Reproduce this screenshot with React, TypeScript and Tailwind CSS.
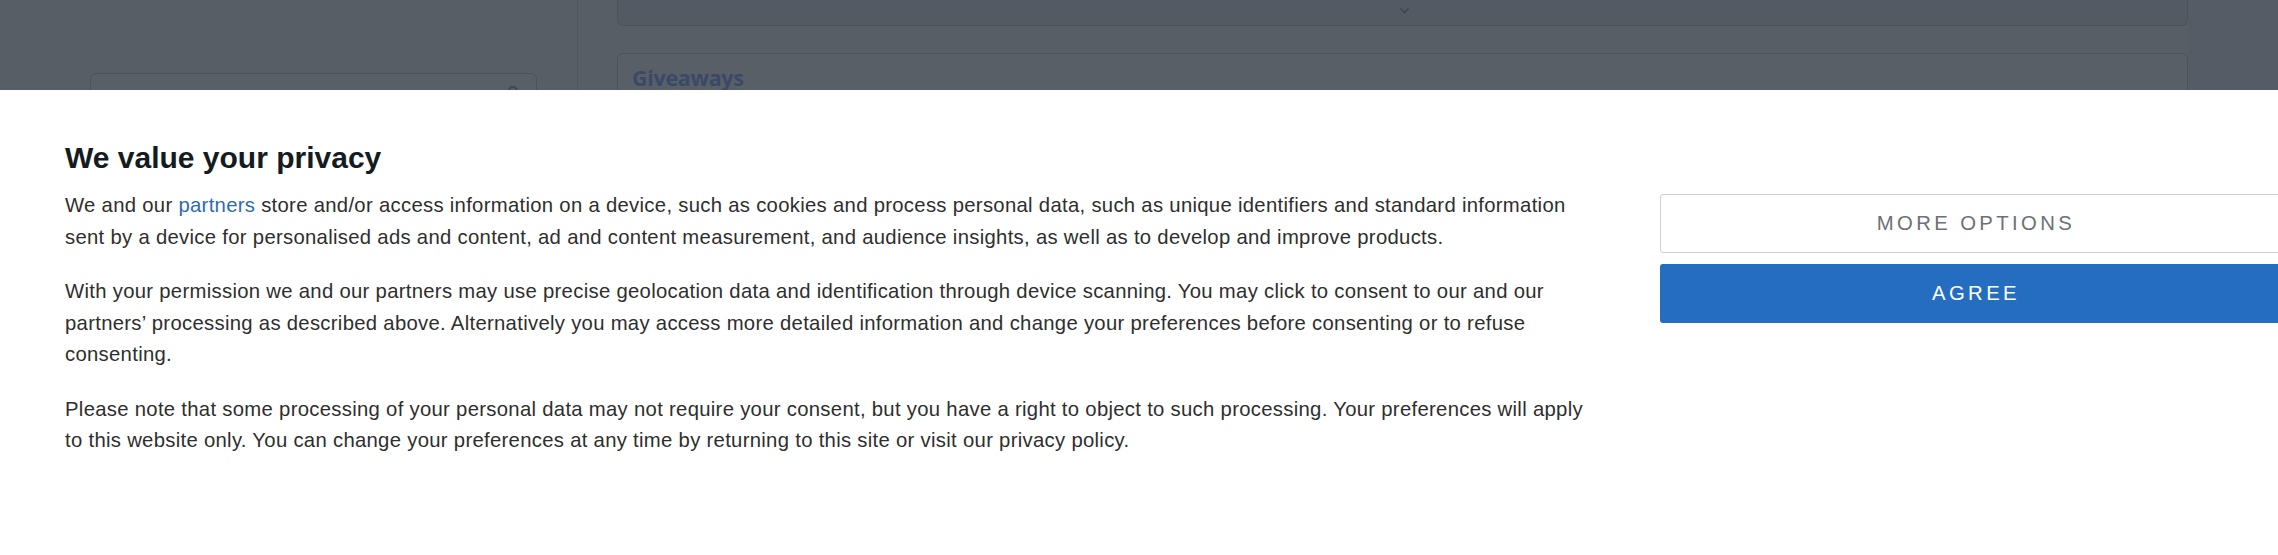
import React from "react";

export default function App() {
  return (
    <div className="w-[2278px] h-[555px] overflow-hidden bg-white" style={{ fontFamily: "'Liberation Sans', Arial, sans-serif" }}>
      {/* dimmed page behind the consent panel */}
      <div className="h-[90px] overflow-hidden flex items-start bg-[#575e66]">
        <div className="w-[577px] shrink-0 pl-[90px] pr-[40px] pt-[73px]">
          <div className="relative h-[40px] rounded-[6px] border border-[#4c535b] bg-[#585f67]">
            <div className="absolute right-[18px] top-[12px] w-[10px] h-[10px] rounded-full border-2 border-[#3f464e]" />
          </div>
        </div>
        <div className="w-px h-[90px] shrink-0 bg-[#50575f]" />
        <div className="w-[1610px] shrink-0 pl-[39px] flex flex-col gap-[27px]">
          <div className="relative h-[27px] shrink-0 -mt-px rounded-b-[6px] border border-t-0 border-[#4c535b] bg-[#535a63]">
            <svg className="absolute left-[781px] top-[8px]" width="11" height="8" viewBox="0 0 11 8" fill="none">
              <path d="M1.5 1.5 L5.5 5.8 L9.5 1.5" stroke="#3d444d" strokeWidth="1.4" />
            </svg>
          </div>
          <div className="h-[60px] shrink-0 rounded-t-[6px] border border-[#4c535b] bg-[#585f67] px-[14px] pt-[8px]">
            <div className="text-[21.5px] font-bold text-[#3a4968] tracking-[-0.3px]" style={{ fontFamily: "'Open Sans', sans-serif" }}>
              Giveaways
            </div>
          </div>
        </div>
        <div className="flex-1 h-[90px] bg-[#555c65]" />
      </div>

      {/* consent panel */}
      <div className="h-[465px] bg-white flex pl-[65px] pt-[50px] gap-[60px]">
        <div className="w-[1535px] shrink-0 text-[#2e2e2e] text-[20.3px] leading-[31.5px] tracking-[0.3px]">
          <h2 className="text-[30px] leading-[35px] font-bold text-[#141b22] tracking-normal mb-[15px]">We value your privacy</h2>
          <p className="mb-[23px]">
            We and our <span className="text-[#2b6cb6]">partners</span> store and/or access information on a device, such as cookies and process personal data, such as unique identifiers and standard information sent by a device for personalised ads and content, ad and content measurement, and audience insights, as well as to develop and improve products.
          </p>
          <p className="mb-[23px]">
            With your permission we and our partners may use precise geolocation data and identification through device scanning. You may click to consent to our and our partners’ processing as described above. Alternatively you may access more detailed information and change your preferences before consenting or to refuse consenting.
          </p>
          <p>
            Please note that some processing of your personal data may not require your consent, but you have a right to object to such processing. Your preferences will apply to this website only. You can change your preferences at any time by returning to this site or visit our privacy policy.
          </p>
        </div>
        <div className="w-[632px] shrink-0 pt-[54px] flex flex-col gap-[11px]">
          <button className="h-[59px] w-full rounded-[3px] border border-[#d0d0d0] bg-white text-[#6c7176] text-[20.3px] tracking-[3.4px] font-medium">
            MORE OPTIONS
          </button>
          <button className="h-[59px] w-full rounded-[3px] bg-[#256dc0] text-white text-[20.3px] tracking-[3.4px] font-medium">
            AGREE
          </button>
        </div>
      </div>
    </div>
  );
}
